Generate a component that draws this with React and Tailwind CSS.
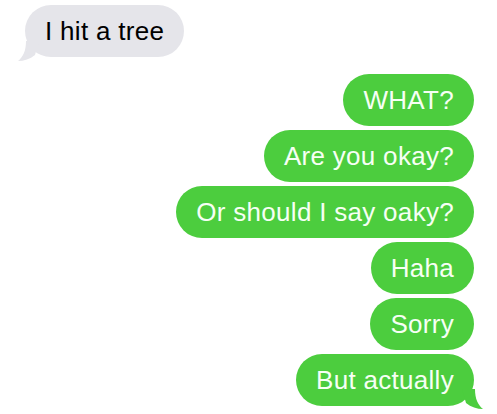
const incoming = "I hit a tree";

const outgoing = [
  "WHAT?",
  "Are you okay?",
  "Or should I say oaky?",
  "Haha",
  "Sorry",
  "But actually",
];

function Tail({ className, color }) {
  return (
    <svg
      width="22"
      height="20"
      viewBox="0 0 22 20"
      className={`absolute ${className}`}
    >
      <path d="M9 0 C9 10 6 16 1 20 C7 20 13 18 18 14 L22 0 Z" fill={color} />
    </svg>
  );
}

export default function App() {
  return (
    <div
      className="w-[497px] h-[414px] bg-white flex flex-col pt-[5px] overflow-hidden"
      style={{ fontFamily: '"Liberation Sans", Arial, sans-serif' }}
    >
      {/* Incoming */}
      <div className="relative self-start ml-[25px] h-[52px] px-5 flex items-center rounded-full bg-[#e5e5ea] text-[26px] tracking-[0.3px] text-black">
        <Tail className="-left-[8px] -bottom-[4px]" color="#e5e5ea" />
        <span className="relative">{incoming}</span>
      </div>

      {/* Outgoing */}
      <div className="mt-[17px] flex flex-col items-end gap-[4px] pr-[23px]">
        {outgoing.map((msg, i) => (
          <div
            key={i}
            className="relative h-[52px] px-5 flex items-center rounded-full bg-[#4ccd3e] text-[26px] tracking-[0.3px] text-[#f6fff4]"
          >
            {i === outgoing.length - 1 && (
              <Tail className="-right-[10px] -bottom-[3px] -scale-x-100" color="#4ccd3e" />
            )}
            <span className="relative">{msg}</span>
          </div>
        ))}
      </div>
    </div>
  );
}
